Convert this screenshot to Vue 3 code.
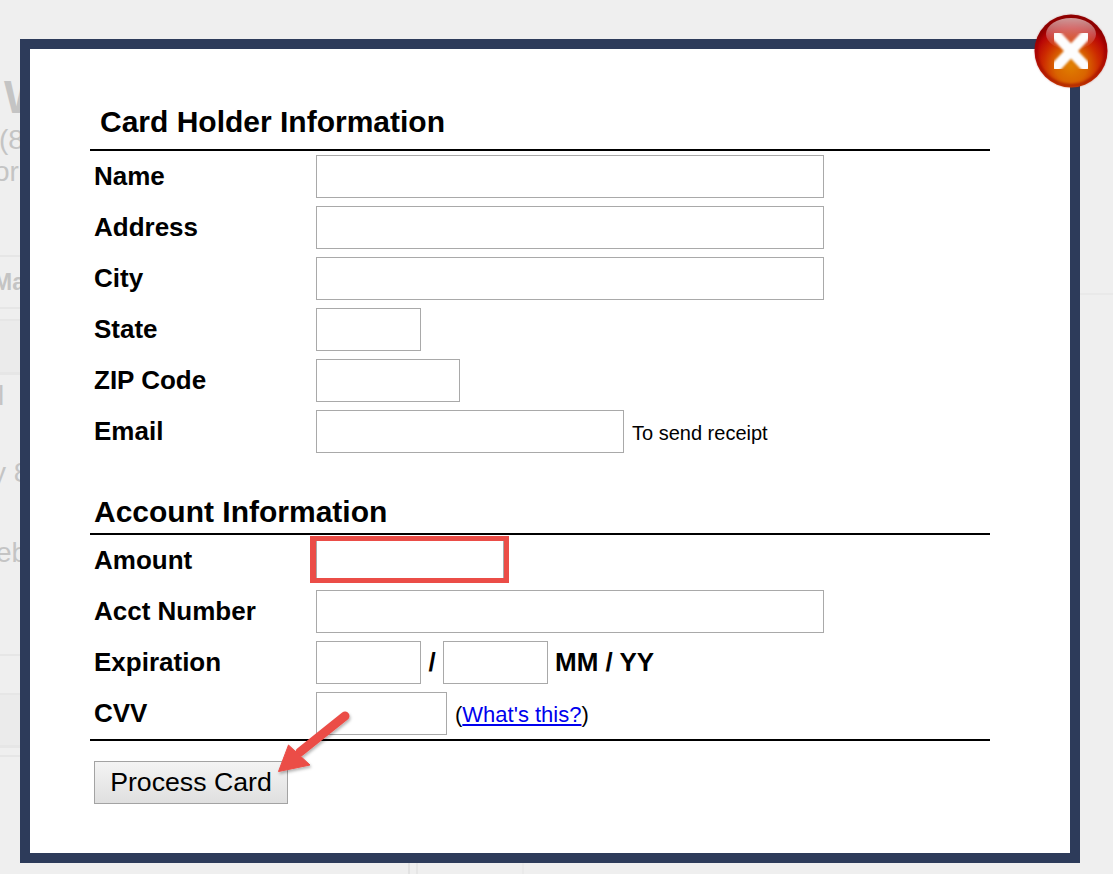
<script setup>
const section1 = [
  { label: 'Name', width: 508 },
  { label: 'Address', width: 508 },
  { label: 'City', width: 508 },
  { label: 'State', width: 105 },
  { label: 'ZIP Code', width: 144 },
]
</script>

<template>
  <div class="page">
    <div class="bg">
      <div class="bg-title">W</div>
      <div class="bg-phone">(8</div>
      <div class="bg-or">or</div>
      <div class="bg-tabs">Ma</div>
      <div class="bg-band"></div>
      <div class="bg-text bg-l">l</div>
      <div class="bg-text bg-y">y 8</div>
      <div class="bg-text bg-eb">eb</div>
      <div class="bg-line line-a"></div>
      <div class="bg-band2"></div>
      <div class="bg-line line-b"></div>
    </div>
    <div class="bg-right-line"></div>
    <div class="bg-v v1"></div>
    <div class="bg-v v2"></div>
    <div class="bg-v v3"></div>

    <div class="modal">
      <h2 class="title first">Card Holder Information</h2>
      <div class="rows">
        <div v-for="r in section1" :key="r.label" class="row">
          <label class="label">{{ r.label }}</label>
          <input class="input" type="text" :style="{ width: r.width + 'px' }" />
        </div>
        <div class="row">
          <label class="label">Email</label>
          <input class="input email" type="text" />
          <span class="hint">To send receipt</span>
        </div>
      </div>

      <h2 class="title second">Account Information</h2>
      <div class="rows">
        <div class="row">
          <label class="label">Amount</label>
          <div class="amount-wrap">
            <input class="input amount" type="text" />
            <div class="highlight"></div>
          </div>
        </div>
        <div class="row">
          <label class="label">Acct Number</label>
          <input class="input full" type="text" />
        </div>
        <div class="row">
          <label class="label">Expiration</label>
          <input class="input small" type="text" />
          <span class="slash">/</span>
          <input class="input small" type="text" />
          <span class="mmyy">MM / YY</span>
        </div>
        <div class="row">
          <label class="label">CVV</label>
          <input class="input cvv" type="text" />
          <span class="whats">(<a href="#" class="link">What's this?</a>)</span>
        </div>
      </div>
      <div class="actions">
        <button class="btn" type="button">Process Card</button>
      </div>

      <svg class="arrow" width="90" height="80" viewBox="0 0 90 80">
        <defs>
          <filter id="ash" x="-20%" y="-20%" width="140%" height="140%">
            <feDropShadow dx="1" dy="2" stdDeviation="1.5" flood-color="#000" flood-opacity="0.3" />
          </filter>
        </defs>
        <g filter="url(#ash)">
          <path d="M71 10 L26 46" stroke="#eb4d47" stroke-width="9" stroke-linecap="round" fill="none" />
          <path d="M4.5 65.5 L14.5 39 L36 59 Z" fill="#eb4d47" stroke="#eb4d47" stroke-linejoin="round" stroke-width="1" />
        </g>
      </svg>
    </div>

    <svg class="close" width="76" height="76" viewBox="0 0 76 76">
      <defs>
        <radialGradient id="rim" cx="50%" cy="70%" r="62%">
          <stop offset="0%" stop-color="#e08000" />
          <stop offset="36%" stop-color="#d96400" />
          <stop offset="62%" stop-color="#cc2a00" />
          <stop offset="84%" stop-color="#b80606" />
          <stop offset="100%" stop-color="#900000" />
        </radialGradient>
        <linearGradient id="gloss" x1="0" y1="0" x2="0" y2="1">
          <stop offset="0%" stop-color="#fff" stop-opacity="0.6" />
          <stop offset="100%" stop-color="#fff" stop-opacity="0" />
        </linearGradient>
        <filter id="soft" x="-10%" y="-10%" width="120%" height="120%">
          <feGaussianBlur stdDeviation="1" />
        </filter>
      </defs>
      <circle cx="38" cy="38" r="36.5" fill="url(#rim)" />
      <circle cx="38" cy="38" r="34.5" fill="none" stroke="#8e0000" stroke-width="3" opacity="0.5" filter="url(#soft)" />
      <ellipse cx="38" cy="21" rx="25" ry="16" fill="url(#gloss)" />
      <path d="M24 23 L52 53 M52 23 L24 53" stroke="#fdfdfd" stroke-width="10.5" stroke-linecap="round" filter="url(#soft)" />
    </svg>
  </div>
</template>

<style scoped>
.page {
  position: relative;
  width: 1113px;
  height: 874px;
  overflow: hidden;
  background: #efefef;
  font-family: "Liberation Sans", Arial, sans-serif;
  color: #000;
}
.bg {
  width: 20px;
  color: #c4c4c4;
  white-space: nowrap;
}
.bg-title {
  padding: 72px 0 0 4px;
  font-size: 46px;
  font-weight: 700;
  line-height: 50px;
  height: 50px;
}
.bg-phone { font-size: 28px; line-height: 32px; margin-top: 2px; margin-left: -1px; }
.bg-or { font-size: 28px; line-height: 32px; margin-left: -6px; }
.bg-tabs {
  margin-top: 67px;
  border-top: 2px solid #e6e6e6;
  border-bottom: 2px solid #e6e6e6;
  height: 54px;
  line-height: 50px;
  font-size: 23px;
  font-weight: 700;
  text-indent: -7px;
  box-sizing: border-box;
}
.bg-band {
  margin-top: 10px;
  height: 56px;
  box-sizing: border-box;
  background: #ebebeb;
  border-top: 2px solid #e6e6e6;
  border-bottom: 3px solid #e6e6e6;
}
.bg-text { font-size: 28px; line-height: 30px; }
.bg-l { margin-top: 6px; margin-left: -2px; }
.bg-y { margin-top: 47px; text-indent: -8px; }
.bg-eb { margin-top: 50px; margin-left: -4px; }
.bg-line { height: 2px; background: #e6e6e6; }
.line-a { margin-top: 86px; }
.line-b { margin-top: 7px; }
.bg-band2 {
  margin-top: 37px;
  height: 55px;
  box-sizing: border-box;
  background: #ebebeb;
  border-top: 2px solid #e6e6e6;
  border-bottom: 3px solid #e6e6e6;
}
.bg-right-line {
  position: absolute;
  left: 1080px;
  top: 293px;
  width: 33px;
  height: 2px;
  background: #e9e9e9;
}
.bg-v { position: absolute; top: 863px; height: 11px; width: 2px; background: #e2e2e2; }
.v1 { left: 408px; }
.v2 { left: 416px; background: #e6e6e6; }
.v3 { left: 522px; background: #eaeaea; }

.modal {
  position: absolute;
  left: 20px;
  top: 39px;
  width: 1060px;
  height: 824px;
  box-sizing: border-box;
  border: 10px solid #2d3b5a;
  background: #fff;
  padding: 0 80px 0 60px;
}
.title {
  margin: 0;
  font-size: 30px;
  font-weight: 700;
  line-height: 34px;
  border-bottom: 2px solid #000;
}
.first { padding: 56px 0 10px 10px; }
.second { margin-top: 42px; padding: 0 0 4px 4px; }
.rows {
  display: flex;
  flex-direction: column;
  gap: 8px;
  padding-top: 4px;
}
.row {
  display: flex;
  align-items: center;
  height: 43px;
}
.label {
  width: 226px;
  padding-left: 4px;
  box-sizing: border-box;
  font-size: 26px;
  font-weight: 700;
  flex: none;
}
.input {
  box-sizing: border-box;
  height: 43px;
  border: 1px solid #a9a9a9;
  background: #fff;
  padding: 0;
  margin: 0;
  outline: none;
  flex: none;
}
.email { width: 308px; }
.full { width: 508px; }
.small { width: 105px; }
.cvv { width: 131px; }
.amount { width: 188px; display: block; }
.amount-wrap { position: relative; flex: none; }
.highlight {
  position: absolute;
  left: -6px;
  top: -3px;
  width: 199px;
  height: 47px;
  box-sizing: border-box;
  border: 5px solid #eb4d47;
  border-left-width: 6px;
}
.hint { margin: 4px 0 0 8px; font-size: 20px; }
.slash { width: 22px; text-align: center; font-size: 26px; font-weight: 700; }
.mmyy { margin-left: 7px; font-size: 26px; font-weight: 700; }
.whats { margin: 2px 0 0 8px; font-size: 22px; }
.link { color: #0000ee; text-decoration: underline; }
.actions {
  margin-top: 4px;
  border-top: 2px solid #000;
  padding: 20px 0 0 4px;
}
.btn {
  display: block;
  box-sizing: border-box;
  width: 194px;
  height: 43px;
  padding: 0;
  border: 1px solid #a3a3a3;
  background: linear-gradient(#f4f4f4, #dfdfdf);
  font-family: inherit;
  font-size: 26.7px;
  color: #000;
}
.arrow {
  position: absolute;
  left: 244px;
  top: 657px;
}
.close {
  position: absolute;
  left: 1033px;
  top: 13px;
}
</style>
